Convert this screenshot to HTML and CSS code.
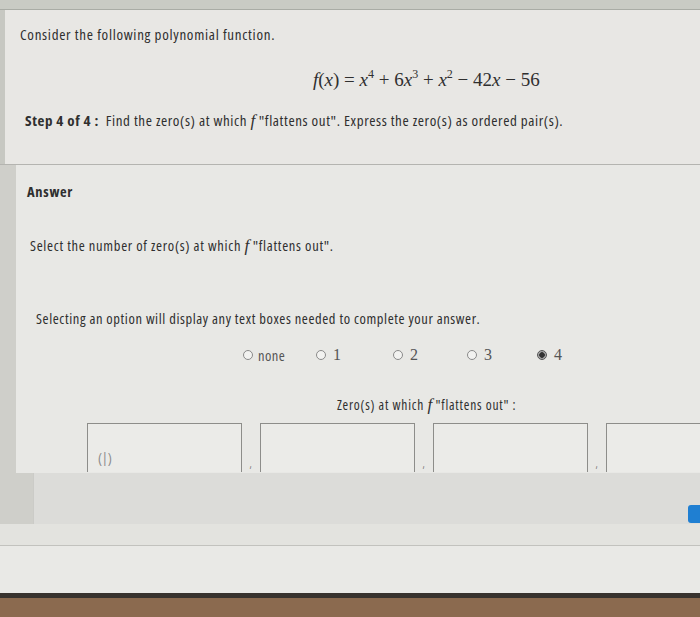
FILE: index.html
```html
<!DOCTYPE html>
<html>
<head>
<meta charset="utf-8">
<link rel="stylesheet" href="styles.css">
</head>
<body>
<div class="screen">
  <div class="topbar"></div>
  <div class="question-wrap">
    <div class="question">
      <p class="intro">Consider the following polynomial function.</p>
      <p class="formula"><i>f</i>(<i>x</i>) = <i>x</i><sup>4</sup> + 6<i>x</i><sup>3</sup> + <i>x</i><sup>2</sup> − 42<i>x</i> − 56</p>
      <p class="step"><b>Step 4 of 4 :</b>&nbsp; Find the zero(s) at which <i class="ff">f</i> "flattens out". Express the zero(s) as ordered pair(s).</p>
    </div>
  </div>
  <div class="answer-wrap">
    <div class="answer">
      <p class="answer-title">Answer</p>
      <p class="select">Select the number of zero(s) at which <i class="ff">f</i> "flattens out".</p>
      <p class="hint">Selecting an option will display any text boxes needed to complete your answer.</p>
      <div class="radios">
        <span class="opt"><span class="radio"></span><span class="lbl-none">none</span></span>
        <span class="opt"><span class="radio"></span><span class="num">1</span></span>
        <span class="opt"><span class="radio"></span><span class="num">2</span></span>
        <span class="opt"><span class="radio"></span><span class="num">3</span></span>
        <span class="opt"><span class="radio checked"></span><span class="num">4</span></span>
      </div>
      <p class="zeros">Zero(s) at which <i class="ff">f</i> "flattens out" :</p>
      <div class="boxes">
        <div class="box"><span class="cursor">(|)</span></div>
        <span class="comma">,</span>
        <div class="box"></div>
        <span class="comma">,</span>
        <div class="box"></div>
        <span class="comma">,</span>
        <div class="box last"></div>
      </div>
    </div>
    <div class="toolbar">
      <span class="submit"></span>
    </div>
  </div>
  <div class="footer-band"></div>
  <div class="footer"></div>
  <div class="bezel"></div>
  <div class="desk"></div>
</div>
</body>
</html>
```

FILE: styles.css
```css
* { box-sizing: border-box; }
html, body {
  margin: 0;
  padding: 0;
}
body {
  width: 700px;
  height: 617px;
  overflow: hidden;
  background: #d2d2cd;
  font-family: "Open Sans", "DejaVu Sans", sans-serif;
  color: #2f2f2f;
}
p { margin: 0; }

.screen {
  display: flex;
  flex-direction: column;
  height: 617px;
}

.topbar {
  height: 10px;
  background: #c9cbc4;
  border-bottom: 1px solid #a9aca5;
}

.question-wrap {
  background: #c7c8c2;
  padding-left: 5px;
}
.question {
  background: #e8e7e4;
  height: 154px;
  padding: 14px 0 0 15px;
  font-size: 15px;
  font-stretch: 75%;
  letter-spacing: 0.7px;
}
.intro { line-height: 20px; }
.formula {
  font-family: "Liberation Serif", serif;
  font-size: 19px;
  letter-spacing: 0;
  line-height: 22px;
  margin-top: 25px;
  padding-left: 293px;
  font-stretch: normal;
}
.formula sup {
  font-size: 12px;
  vertical-align: 8px;
  line-height: 0;
}
.step {
  margin-top: 19px;
  padding-left: 5px;
  line-height: 20px;
  letter-spacing: 0.6px;
}
.step b { font-weight: 700; }
.ff {
  font-family: "Liberation Serif", serif;
  font-size: 17px;
  letter-spacing: 0;
}

.answer-wrap {
  background: #cfcfca;
  padding-left: 16px;
  border-top: 1px solid #b4b4b0;
}
.answer {
  background: #e8e8e5;
  height: 308px;
  padding: 17px 0 0 11px;
  font-size: 14.5px;
  font-stretch: 75%;
  letter-spacing: 0.7px;
}
.answer-title {
  font-weight: 700;
  line-height: 20px;
}
.select {
  margin-top: 34px;
  padding-left: 3px;
  line-height: 20px;
}
.hint {
  margin-top: 53px;
  padding-left: 9px;
  line-height: 20px;
  letter-spacing: 0.6px;
}
.radios {
  display: grid;
  grid-template-columns: 73px 77px 74px 70px 60px;
  margin-top: 16px;
  padding-left: 216px;
  height: 20px;
  align-items: center;
  color: #555;
  letter-spacing: 0;
}
.opt {
  display: flex;
  align-items: center;
  gap: 5px;
}
.radio {
  width: 10px;
  height: 10px;
  border: 1.3px solid #8a8a8a;
  border-radius: 50%;
  background: #f2f2f0;
  flex: none;
}
.radio.checked {
  border-color: #555;
  background: radial-gradient(circle, #333 0 2.5px, #9a9a9a 3px, #cfcfcf 100%);
}
.num {
  font-family: "Liberation Serif", serif;
  font-size: 16px;
  letter-spacing: 0;
  color: #555;
  margin-left: 2px;
}
.lbl-none { font-size: 14.5px; color: #555; letter-spacing: 0.4px; }

.zeros {
  margin-top: 30px;
  padding-left: 310px;
  line-height: 20px;
  font-size: 13.5px;
  letter-spacing: 0.8px;
}
.boxes {
  display: flex;
  align-items: flex-end;
  margin-top: 8px;
  margin-left: 60px;
}
.box {
  width: 155px;
  height: 49px;
  border: 1.3px solid #8d8d8a;
  border-bottom: none;
  background: #ebebe8;
  position: relative;
  flex: none;
}
.box.last { width: 110px; }
.comma {
  width: 18px;
  text-align: center;
  font-size: 10px;
  color: #777;
  line-height: 16px;
  flex: none;
}
.cursor {
  position: absolute;
  left: 10px;
  top: 24px;
  font-size: 14px;
  color: #8a8a8a;
  letter-spacing: 0;
}

.toolbar {
  height: 51px;
  background: #dcdcd9;
  margin-left: 17px;
  border-left: 1px solid #cbcbc7;
  display: flex;
  justify-content: flex-end;
  align-items: flex-end;
  padding-bottom: 1px;
}
.submit {
  display: block;
  width: 12px;
  height: 18px;
  background: #1f7fd2;
  border-radius: 3px 0 0 3px;
}

.footer-band {
  height: 22px;
  background: #e3e3df;
  border-bottom: 1px solid #c2c2be;
}
.footer {
  height: 47px;
  background: #e9e9e6;
}
.bezel {
  height: 5px;
  background: #37322e;
}
.desk {
  flex: 1;
  background: #8b6a4f;
}
```
